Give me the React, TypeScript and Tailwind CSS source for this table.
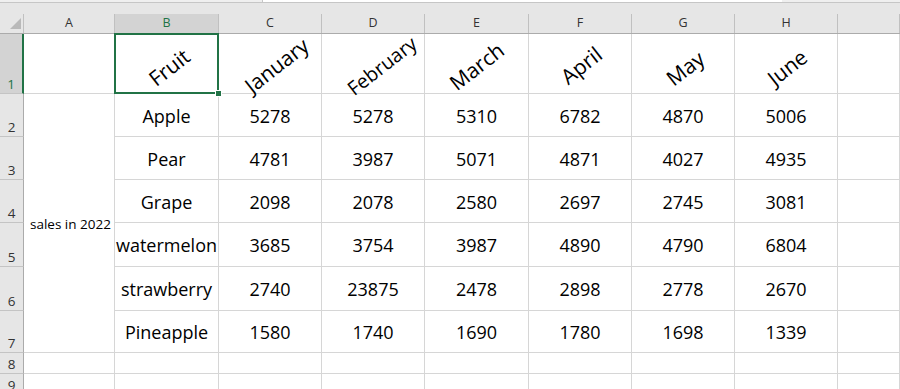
import React from 'react'

const months = [
  { label: 'January', cls: 'text-[21px] translate-x-[7px] translate-y-[2px]' },
  { label: 'February', cls: 'text-[19.5px] translate-x-[9px] translate-y-[2px]' },
  { label: 'March', cls: 'text-[21px] translate-x-[1px] translate-y-[3px]' },
  { label: 'April', cls: 'text-[21px] translate-x-[2px] translate-y-[2px]' },
  { label: 'May', cls: 'text-[21px] translate-x-[3px] translate-y-[5px]' },
  { label: 'June', cls: 'text-[21px] translate-x-[2px] translate-y-[4px]' },
]

const rows: [string, number[]][] = [
  ['Apple', [5278, 5278, 5310, 6782, 4870, 5006]],
  ['Pear', [4781, 3987, 5071, 4871, 4027, 4935]],
  ['Grape', [2098, 2078, 2580, 2697, 2745, 3081]],
  ['watermelon', [3685, 3754, 3987, 4890, 4790, 6804]],
  ['strawberry', [2740, 23875, 2478, 2898, 2778, 2670]],
  ['Pineapple', [1580, 1740, 1690, 1780, 1698, 1339]],
]

const letters = ['A', 'B', 'C', 'D', 'E', 'F', 'G', 'H', '']

const cols = 'grid grid-cols-[24px_91px_104px_103px_103px_104px_103px_103px_103px_1fr]'

const RowHead = ({ n, active }: { n: number; active?: boolean }) => (
  <div
    className={
      'flex-1 flex items-end justify-center pb-[2px] leading-none text-[13.5px] border-b border-[#c4c4c4] ' +
      (active
        ? 'bg-[#d3d3d3] text-[#217346] border-r-2 border-r-[#217346]'
        : 'bg-[#e6e6e6] text-[#333] border-r border-r-[#ababab]')
    }
  >
    {n}
  </div>
)

const Cell = ({ children, className = '' }: { children?: React.ReactNode; className?: string }) => (
  <div className={'flex items-center justify-center border-r border-b border-[#d6d6d6] bg-white ' + className}>
    {children}
  </div>
)

export default function App() {
  const heights = ['h-[43px]', 'h-[43px]', 'h-[43px]', 'h-[44px]', 'h-[44px]', 'h-[42px]']

  return (
    <div className="w-[900px] h-[389px] overflow-hidden bg-[#e6e6e6] font-['Open_Sans',sans-serif] text-black">
      {/* strip of the formula bar */}
      <div className="h-[3px] flex border-b border-[#c6c6c6] bg-[#efefef]">
        <div className="w-[262px]" />
        <div className="w-[520px] bg-white border-l border-[#c6c6c6]" />
      </div>
      <div className="h-[11px]" />

      {/* column headers */}
      <div className={cols + ' h-[20px] border-b border-[#ababab]'}>
        <div className="relative border-r border-[#c0c0c0]">
          <div className="absolute left-[10px] top-[4px] w-0 h-0 border-l-[11px] border-l-transparent border-b-[11px] border-b-[#b9b9b9]" />
        </div>
        {letters.map((l, i) => (
          <div
            key={i}
            className={
              'flex items-center justify-center text-[12.5px] border-r border-[#c0c0c0] ' +
              (l === 'B' ? 'bg-[#d3d3d3] text-[#217346]' : 'text-[#333]')
            }
          >
            {l}
          </div>
        ))}
      </div>

      {/* row 1 */}
      <div className={cols + ' h-[60px]'}>
        <div className="flex">
          <RowHead n={1} active />
        </div>
        <Cell />
        <Cell className="relative">
          <span className="rotate-[-38deg] translate-x-[3px] translate-y-[4px] text-[21px] whitespace-nowrap">Fruit</span>
          <div className="absolute inset-[-1px] border-2 border-[#217346]" />
          <div className="absolute right-[-4px] bottom-[-4px] w-[7px] h-[7px] bg-[#217346] border border-white" />
        </Cell>
        {months.map((m) => (
          <Cell key={m.label}>
            <span className={'rotate-[-38deg] whitespace-nowrap ' + m.cls}>{m.label}</span>
          </Cell>
        ))}
        <Cell />
      </div>

      {/* data rows 2-7, column A merged */}
      <div className="flex">
        <div className="w-[24px] flex flex-col">
          {heights.map((h, i) => (
            <div key={i} className={h + ' flex'}>
              <RowHead n={i + 2} />
            </div>
          ))}
        </div>
        <div className="w-[91px] flex items-center pl-[6px] pt-[2px] text-[13.5px] bg-white border-r border-b border-[#d6d6d6]">
          sales in 2022
        </div>
        <div className="flex-1 flex flex-col">
          {rows.map(([fruit, vals], i) => (
            <div key={fruit} className={'grid grid-cols-[104px_103px_103px_104px_103px_103px_103px_1fr] text-[18px] ' + heights[i]}>
              <Cell className="pt-[2px]">{fruit}</Cell>
              {vals.map((v, j) => (
                <Cell key={j} className="pt-[2px]">{v}</Cell>
              ))}
              <Cell />
            </div>
          ))}
        </div>
      </div>

      {/* empty rows 8, 9 */}
      {[8, 9].map((n) => (
        <div key={n} className={cols + ' h-[21px]'}>
          <div className="flex">
            <RowHead n={n} />
          </div>
          {letters.map((_, i) => (
            <Cell key={i} />
          ))}
        </div>
      ))}
    </div>
  )
}
